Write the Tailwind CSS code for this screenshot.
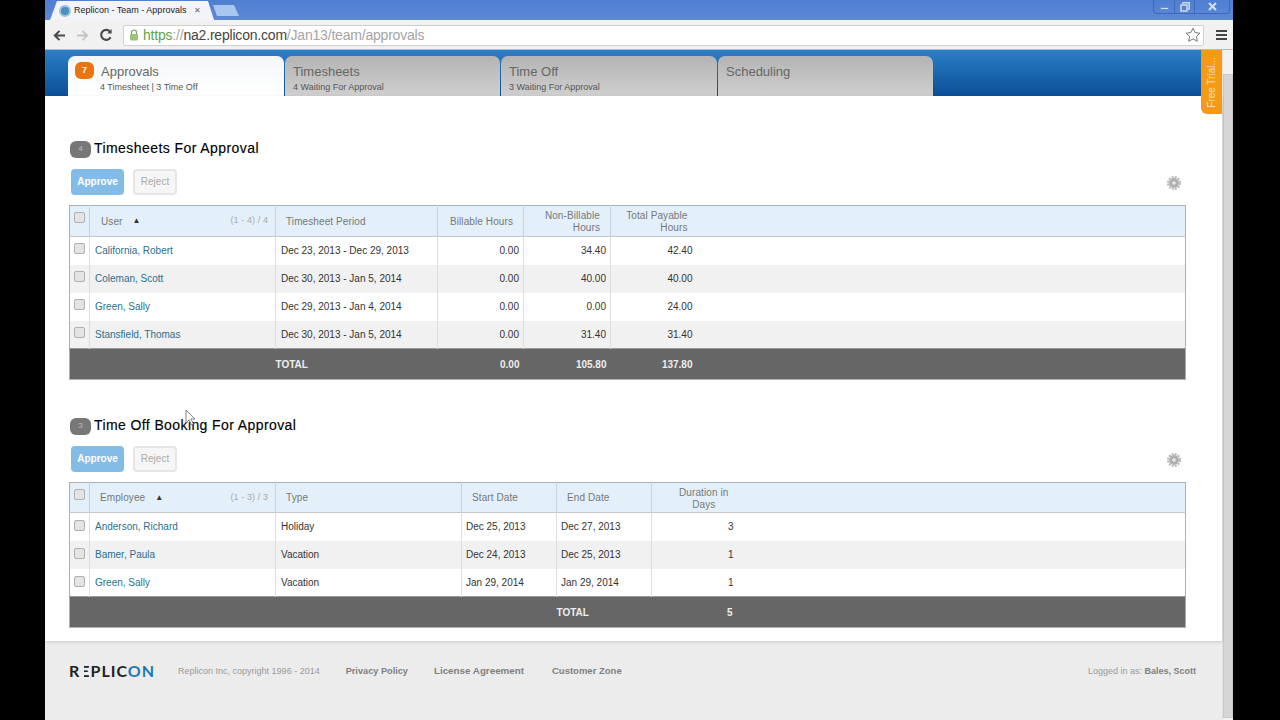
<!DOCTYPE html>
<html lang="en">
<head>
<meta charset="UTF-8" />
<title>Replicon - Team - Approvals</title>
<script src="https://cdn.jsdelivr.net/npm/@tailwindcss/browser@4"></script>
</head>
<body class="bg-black overflow-hidden font-['Liberation_Sans',Arial,sans-serif]">
<div class="relative ml-[45px] w-[1188px] h-[720px] flex flex-col overflow-hidden bg-white">

    <!-- window title bar -->
    <div class="h-[20px] shrink-0 flex items-end relative bg-gradient-to-b from-[#4f7fd0] to-[#5d88d8]">
        <div class="ml-[5px] w-[164px] h-[19px] bg-[#f2f4f7] [clip-path:polygon(0_100%,7px_0,calc(100%-6px)_0,100%_100%)] flex items-center pl-[9px] pr-[13px] text-[9px] text-[#222]">
            <span class="w-[12px] h-[12px] rounded-full bg-[#4a90b8] border-[2px] border-[#9cc3dc] mr-[3px] shrink-0"></span>
            <span class="whitespace-nowrap">Replicon - Team - Approvals</span>
            <span class="ml-auto text-[#666] text-[8px] leading-none">✕</span>
        </div>
        <div class="-ml-[1px] mb-[4px] w-[26px] h-[11px] bg-[#a9c6ee] [clip-path:polygon(0_0,calc(100%-5px)_0,100%_100%,4px_100%)]"></div>
        <div class="absolute right-[3px] top-0 h-[14px] w-[77px] flex border border-t-0 border-[#3f69b5] rounded-b-[4px]">
            <span class="w-[21px] border-r border-[#3f69b5] flex items-center justify-center"><span class="w-[9px] h-[3px] bg-[#cfdcf3] border border-[#6f8fc8] mt-[3px] rounded-[1px]"></span></span>
            <span class="w-[20px] border-r border-[#3f69b5] flex items-center justify-center">
                <svg class="w-[10px] h-[10px]" viewBox="0 0 10 10" fill="none" stroke="#cfdcf3" stroke-width="1.500"><path d="M3 2V.8h6.200V7H8"/><rect x="1" y="3" width="6" height="6"/></svg>
            </span>
            <span class="flex-1 flex items-center justify-center">
                <svg class="w-[9px] h-[9px]" viewBox="0 0 9 9" fill="none" stroke="#d8e3f6" stroke-width="2"><path d="m1 1 7 7M8 1 1 8"/></svg>
            </span>
        </div>
    </div>

    <!-- browser toolbar -->
    <div class="h-[30px] shrink-0 flex items-center pt-[1px] bg-[#f1f1f1] border-b border-[#b9b9b9]">
        <svg class="ml-[8px] w-[13px] h-[13px]" viewBox="0 0 14 14" fill="none" stroke="#4a4a4a" stroke-width="2.2"><path d="M13 7H2M7 2 2 7l5 5"/></svg>
        <svg class="ml-[10px] w-[13px] h-[13px]" viewBox="0 0 14 14" fill="none" stroke="#c4c4c4" stroke-width="2"><path d="M1 7h11M7 2l5 5-5 5"/></svg>
        <svg class="ml-[10px] w-[14px] h-[14px]" viewBox="0 0 14 14" fill="none" stroke="#4a4a4a" stroke-width="2.1"><path d="M11.6 9.200A5 5 0 1 1 11 3.600"/><path d="M12.600 1v4.400H8.200" fill="#4a4a4a" stroke="none"/></svg>
        <div class="ml-[10px] w-[1081px] h-[21px] bg-white border border-[#cfcfcf] rounded-[2px] flex items-center pl-[5px] pr-[2px] text-[14px] tracking-[-0.2px]">
            <svg class="w-[10px] h-[12px] mr-[4px]" viewBox="0 0 10 12"><path d="M2.500 5V3.500a2.500 2.500 0 0 1 5 0V5" fill="none" stroke="#7d9a6a" stroke-width="1.200"/><rect x="1" y="5" width="8" height="6.500" rx="1" fill="#9cc27c"/></svg>
            <span class="text-[#5fa34c]">https</span><span class="text-[#a5a5a5]">://</span><span class="text-[#444]">na2.replicon.com</span><span class="text-[#a5a5a5]">/Jan13/team/approvals</span>
            <svg class="ml-auto w-[16px] h-[16px]" viewBox="0 0 16 16" fill="#fff" stroke="#777" stroke-width="1"><path d="m8 1.200 2.100 4.400 4.800.6-3.500 3.300.9 4.800L8 11.900l-4.300 2.400.9-4.800L1.100 6.200l4.800-.6z"/></svg>
        </div>
        <div class="ml-[12px] w-[11px] flex flex-col gap-[2px]">
            <span class="h-[2px] bg-[#444]"></span><span class="h-[2px] bg-[#444]"></span><span class="h-[2px] bg-[#444]"></span>
        </div>
    </div>

    <div class="flex-1 flex min-h-0">
        <div class="w-[1177px] flex flex-col">
            <!-- blue app header with tabs -->
            <div class="h-[46px] shrink-0 flex items-end pl-[23px] gap-[1px] bg-gradient-to-b from-[#2a80c8] to-[#0a4f97]">
                <div class="w-[216px] h-[40px] bg-gradient-to-b from-[#f4f6f8] to-white rounded-t-[7px] flex items-start pl-[7px] pt-[6px]">
                    <span class="w-[19px] h-[17px] rounded-[6px] bg-[#ec7410] text-white text-[9px] font-bold flex items-center justify-center">7</span>
                    <div class="ml-[7px] pt-[1px]">
                        <div class="text-[13px] leading-[17px] text-[#666]">Approvals</div>
                        <div class="text-[9px] leading-[11px] mt-[2px] -ml-[1px] text-[#555]">4 Timesheet | 3 Time Off</div>
                    </div>
                </div>
                <div class="w-[215px] h-[40px] bg-gradient-to-b from-[#b4b4b4] to-[#cfcfcf] rounded-t-[7px] pl-[8px] pt-[7px]">
                    <div class="text-[13px] leading-[17px] text-[#666]">Timesheets</div>
                    <div class="text-[9px] leading-[11px] mt-[2px] text-[#555]">4 Waiting For Approval</div>
                </div>
                <div class="w-[216px] h-[40px] bg-gradient-to-b from-[#b4b4b4] to-[#cfcfcf] rounded-t-[7px] pl-[8px] pt-[7px]">
                    <div class="text-[13px] leading-[17px] text-[#666]">Time Off</div>
                    <div class="text-[9px] leading-[11px] mt-[2px] text-[#555]">3 Waiting For Approval</div>
                </div>
                <div class="w-[215px] h-[40px] bg-gradient-to-b from-[#b4b4b4] to-[#cfcfcf] rounded-t-[7px] pl-[8px] pt-[7px]">
                    <div class="text-[13px] leading-[17px] text-[#666]">Scheduling</div>
                </div>
            </div>

            <!-- page content -->
            <div class="h-[545px] shrink-0 pl-[24px] pr-[36px] shadow-[0_1px_3px_rgba(0,0,0,0.15)] relative">
                <section class="pt-[43px]">
                    <div class="flex items-center h-[18px]">
                        <span class="ml-[1px] w-[21px] h-[17px] mt-[2px] rounded-[6px] bg-[#777] text-[#bbb] text-[8px] flex items-center justify-center">4</span>
                        <h2 class="ml-[3px] text-[14px] text-black tracking-[0.43px] [-webkit-text-stroke:0.15px_black]">Timesheets For Approval</h2>
                    </div>
                    <div class="flex items-center mt-[10px] h-[29px] pl-[2px]">
                        <button class="w-[53px] h-[26px] rounded-[4px] bg-[#84bce8] text-white text-[10px] font-bold">Approve</button>
                        <button class="ml-[9px] w-[44px] h-[26px] rounded-[4px] bg-[#f6f6f6] border-[2px] border-[#e6e6e6] text-[#aaa] text-[10px]">Reject</button>
                        <svg class="ml-auto mr-[5px] mt-[3px] w-[14px] h-[14px]" viewBox="0 0 14 14"><circle cx="7" cy="7" r="5" fill="#b0b0b0"/><circle cx="7" cy="7" r="6" fill="none" stroke="#b8b8b8" stroke-width="2" stroke-dasharray="2 1.140"/><circle cx="7" cy="7" r="1.800" fill="#e8e8e8"/></svg>
                    </div>
                    <table class="mt-[9px] w-[1117px] table-fixed border-collapse border border-[#aab0b5] text-[10px] text-[#333]">
                        <colgroup><col class="w-[20px]"><col class="w-[186px]"><col class="w-[162px]"><col class="w-[86px]"><col class="w-[87px]"><col class="w-[86px]"><col></colgroup>
                        <thead>
                            <tr class="h-[31px] bg-[#e3f0fa] text-[#777] border-b border-[#c4c8cc] tracking-[0.1px]">
                                <th class="font-normal border-r border-[#c8d4dc] align-top pt-[6px]"><span class="block mx-auto w-[11px] h-[11px] bg-[#e4e4e4] border border-[#b0b0b0] rounded-[2px]"></span></th>
                                <th class="font-normal border-r border-[#c8d4dc] text-left pl-[11px] pr-[7px]"><div class="flex items-center"><span>User</span><span class="ml-[10px] text-[8px] text-[#333]">▲</span><span class="ml-auto text-[#aaa] text-[9px]">(1 - 4) / 4</span></div></th>
                                <th class="font-normal border-r border-[#c8d4dc] text-left pl-[10px]">Timesheet Period</th>
                                <th class="font-normal border-r border-[#c8d4dc] text-right pr-[10px]">Billable Hours</th>
                                <th class="font-normal border-r border-[#c8d4dc] text-right pr-[10px] pt-[2px] leading-[12px]">Non-Billable<br>Hours</th>
                                <th class="font-normal text-right pr-[9px] pt-[2px] leading-[12px]">Total Payable<br>Hours</th>
                                <th></th>
                            </tr>
                        </thead>
                        <tbody>
                            <tr class="h-[28px]">
                                <td class="border-r border-[#ddd] align-top pt-[6px]"><span class="block mx-auto w-[11px] h-[11px] bg-[#e4e4e4] border border-[#b0b0b0] rounded-[2px]"></span></td>
                                <td class="border-r border-[#ddd] pl-[5px] text-[#2a6f8f]">California, Robert</td>
                                <td class="border-r border-[#ddd] pl-[5px]">Dec 23, 2013 - Dec 29, 2013</td>
                                <td class="border-r border-[#ddd] text-right pr-[4px]">0.00</td>
                                <td class="border-r border-[#ddd] text-right pr-[4px]">34.40</td>
                                <td class="text-right pr-[4px]">42.40</td><td></td>
                            </tr>
                            <tr class="h-[28px] bg-[#f1f1f1]">
                                <td class="border-r border-[#ddd] align-top pt-[6px]"><span class="block mx-auto w-[11px] h-[11px] bg-[#e4e4e4] border border-[#b0b0b0] rounded-[2px]"></span></td>
                                <td class="border-r border-[#ddd] pl-[5px] text-[#2a6f8f]">Coleman, Scott</td>
                                <td class="border-r border-[#ddd] pl-[5px]">Dec 30, 2013 - Jan 5, 2014</td>
                                <td class="border-r border-[#ddd] text-right pr-[4px]">0.00</td>
                                <td class="border-r border-[#ddd] text-right pr-[4px]">40.00</td>
                                <td class="text-right pr-[4px]">40.00</td><td></td>
                            </tr>
                            <tr class="h-[28px]">
                                <td class="border-r border-[#ddd] align-top pt-[6px]"><span class="block mx-auto w-[11px] h-[11px] bg-[#e4e4e4] border border-[#b0b0b0] rounded-[2px]"></span></td>
                                <td class="border-r border-[#ddd] pl-[5px] text-[#2a6f8f]">Green, Sally</td>
                                <td class="border-r border-[#ddd] pl-[5px]">Dec 29, 2013 - Jan 4, 2014</td>
                                <td class="border-r border-[#ddd] text-right pr-[4px]">0.00</td>
                                <td class="border-r border-[#ddd] text-right pr-[4px]">0.00</td>
                                <td class="text-right pr-[4px]">24.00</td><td></td>
                            </tr>
                            <tr class="h-[28px] bg-[#f1f1f1]">
                                <td class="border-r border-[#ddd] align-top pt-[6px]"><span class="block mx-auto w-[11px] h-[11px] bg-[#e4e4e4] border border-[#b0b0b0] rounded-[2px]"></span></td>
                                <td class="border-r border-[#ddd] pl-[5px] text-[#2a6f8f]">Stansfield, Thomas</td>
                                <td class="border-r border-[#ddd] pl-[5px]">Dec 30, 2013 - Jan 5, 2014</td>
                                <td class="border-r border-[#ddd] text-right pr-[4px]">0.00</td>
                                <td class="border-r border-[#ddd] text-right pr-[4px]">31.40</td>
                                <td class="text-right pr-[4px]">31.40</td><td></td>
                            </tr>
                        </tbody>
                        <tfoot>
                            <tr class="h-[31px] bg-[#666] text-[#eee] font-bold border-t border-[#999]">
                                <td></td><td></td>
                                <td class="pl-0">TOTAL</td>
                                <td class="text-right pr-[4px]">0.00</td>
                                <td class="text-right pr-[4px]">105.80</td>
                                <td class="text-right pr-[4px]">137.80</td><td></td>
                            </tr>
                        </tfoot>
                    </table>
                </section>

                <section class="pt-[36px]">
                    <div class="flex items-center h-[18px]">
                        <span class="ml-[1px] w-[21px] h-[17px] mt-[2px] rounded-[6px] bg-[#777] text-[#bbb] text-[8px] flex items-center justify-center">3</span>
                        <h2 class="ml-[3px] text-[14px] text-black tracking-[0.4px] [-webkit-text-stroke:0.15px_black]">Time Off Booking For Approval</h2>
                    </div>
                    <div class="flex items-center mt-[10px] h-[29px] pl-[2px]">
                        <button class="w-[53px] h-[26px] rounded-[4px] bg-[#84bce8] text-white text-[10px] font-bold">Approve</button>
                        <button class="ml-[9px] w-[44px] h-[26px] rounded-[4px] bg-[#f6f6f6] border-[2px] border-[#e6e6e6] text-[#aaa] text-[10px]">Reject</button>
                        <svg class="ml-auto mr-[5px] mt-[3px] w-[14px] h-[14px]" viewBox="0 0 14 14"><circle cx="7" cy="7" r="5" fill="#b0b0b0"/><circle cx="7" cy="7" r="6" fill="none" stroke="#b8b8b8" stroke-width="2" stroke-dasharray="2 1.140"/><circle cx="7" cy="7" r="1.800" fill="#e8e8e8"/></svg>
                    </div>
                    <table class="mt-[9px] w-[1117px] table-fixed border-collapse border border-[#aab0b5] text-[10px] text-[#333]">
                        <colgroup><col class="w-[20px]"><col class="w-[186px]"><col class="w-[186px]"><col class="w-[95px]"><col class="w-[95px]"><col class="w-[86px]"><col></colgroup>
                        <thead>
                            <tr class="h-[30px] bg-[#e3f0fa] text-[#777] border-b border-[#c4c8cc] tracking-[0.1px]">
                                <th class="font-normal border-r border-[#c8d4dc] align-top pt-[6px]"><span class="block mx-auto w-[11px] h-[11px] bg-[#e4e4e4] border border-[#b0b0b0] rounded-[2px]"></span></th>
                                <th class="font-normal border-r border-[#c8d4dc] text-left pl-[10px] pr-[7px]"><div class="flex items-center"><span>Employee</span><span class="ml-[10px] text-[8px] text-[#333]">▲</span><span class="ml-auto text-[#aaa] text-[9px]">(1 - 3) / 3</span></div></th>
                                <th class="font-normal border-r border-[#c8d4dc] text-left pl-[10px]">Type</th>
                                <th class="font-normal border-r border-[#c8d4dc] text-left pl-[10px]">Start Date</th>
                                <th class="font-normal border-r border-[#c8d4dc] text-left pl-[10px]">End Date</th>
                                <th class="font-normal text-right pr-[9px] pt-[3px] leading-[12px]"><span class="inline-block text-center">Duration in<br>Days</span></th>
                                <th></th>
                            </tr>
                        </thead>
                        <tbody>
                            <tr class="h-[28px]">
                                <td class="border-r border-[#ddd] align-top pt-[7px]"><span class="block mx-auto w-[11px] h-[11px] bg-[#e4e4e4] border border-[#b0b0b0] rounded-[2px]"></span></td>
                                <td class="border-r border-[#ddd] pl-[5px] text-[#2a6f8f]">Anderson, Richard</td>
                                <td class="border-r border-[#ddd] pl-[5px]">Holiday</td>
                                <td class="border-r border-[#ddd] pl-[4px]">Dec 25, 2013</td>
                                <td class="border-r border-[#ddd] pl-[4px]">Dec 27, 2013</td>
                                <td class="text-right pr-[4px]">3</td><td></td>
                            </tr>
                            <tr class="h-[28px] bg-[#f1f1f1]">
                                <td class="border-r border-[#ddd] align-top pt-[7px]"><span class="block mx-auto w-[11px] h-[11px] bg-[#e4e4e4] border border-[#b0b0b0] rounded-[2px]"></span></td>
                                <td class="border-r border-[#ddd] pl-[5px] text-[#2a6f8f]">Bamer, Paula</td>
                                <td class="border-r border-[#ddd] pl-[5px]">Vacation</td>
                                <td class="border-r border-[#ddd] pl-[4px]">Dec 24, 2013</td>
                                <td class="border-r border-[#ddd] pl-[4px]">Dec 25, 2013</td>
                                <td class="text-right pr-[4px]">1</td><td></td>
                            </tr>
                            <tr class="h-[28px]">
                                <td class="border-r border-[#ddd] align-top pt-[7px]"><span class="block mx-auto w-[11px] h-[11px] bg-[#e4e4e4] border border-[#b0b0b0] rounded-[2px]"></span></td>
                                <td class="border-r border-[#ddd] pl-[5px] text-[#2a6f8f]">Green, Sally</td>
                                <td class="border-r border-[#ddd] pl-[5px]">Vacation</td>
                                <td class="border-r border-[#ddd] pl-[4px]">Jan 29, 2014</td>
                                <td class="border-r border-[#ddd] pl-[4px]">Jan 29, 2014</td>
                                <td class="text-right pr-[4px]">1</td><td></td>
                            </tr>
                        </tbody>
                        <tfoot>
                            <tr class="h-[31px] bg-[#666] text-[#eee] font-bold border-t border-[#999]">
                                <td></td><td></td><td></td><td></td>
                                <td class="pl-0">TOTAL</td>
                                <td class="text-right pr-[5px]">5</td><td></td>
                            </tr>
                        </tfoot>
                    </table>
                </section>
            </div>

            <!-- footer -->
            <footer class="flex-1 bg-[#ececec] flex items-start pl-[24px] pr-[26px] pt-[21px] text-[9px] text-[#999]">
                <span class="text-[16px] leading-[18px] tracking-[1px] font-['Lato',sans-serif] font-bold text-[#222]">R<span class="relative">E<span class="absolute left-[1px] top-[3px] bottom-[3px] w-[3px] bg-[#ececec]"></span></span>PLIC<span class="text-[#1b78b8]">ON</span></span>
                <span class="ml-[23px] leading-[18px]">Replicon Inc, copyright 1996 - 2014</span>
                <a class="ml-[26px] leading-[18px] text-[9.2px] font-bold text-[#808080]">Privacy Policy</a>
                <a class="ml-[26px] leading-[18px] text-[9.8px] font-bold text-[#808080]">License Agreement</a>
                <a class="ml-[28px] leading-[18px] text-[9.5px] font-bold text-[#808080]">Customer Zone</a>
                <span class="ml-auto leading-[18px]">Logged in as: <b class="text-[#808080]">Bales, Scott</b></span>
            </footer>
        </div>

        <!-- scrollbar -->
        <div class="w-[11px] bg-[#f2f2f2] border-l border-[#e2e2e2] pt-[24px]">
            <div class="h-[644px] bg-[#d6d6d6] border border-[#c8c8c8]"></div>
        </div>
    </div>

    <!-- free trial tab -->
    <div class="absolute left-[1156px] top-[50px] w-[21px] h-[64px] bg-[#f59a12] rounded-bl-[6px] flex items-center justify-center">
        <span class="-rotate-90 whitespace-nowrap text-[10px] text-[#fde3b8]">Free Trial...</span>
    </div>

    <!-- mouse cursor -->
    <svg class="absolute left-[140px] top-[409px] w-[12px] h-[17px]" viewBox="0 0 12 17"><path d="M1 1v13l3-3 2.500 5 2-1-2.500-5h4z" fill="#fff" fill-opacity="0.8" stroke="#666" stroke-width="0.8"/></svg>
</div>
</body>
</html>
